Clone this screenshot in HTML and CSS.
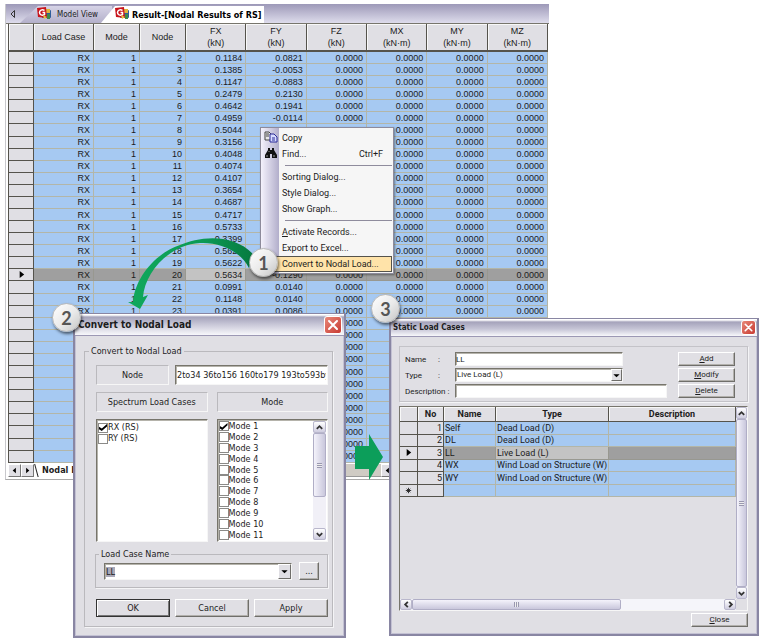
FILE: index.html
```html
<!DOCTYPE html>
<html lang="en">
<head>
<meta charset="utf-8">
<title>Convert to Nodal Load</title>
<link rel="stylesheet" href="styles.css">
</head>
<body>
<svg class="defs" aria-hidden="true">
  <symbol id="app" viewBox="0 0 14 13">
    <rect x="5" y="3" width="9" height="8" rx="1" fill="#2f5d9c"/>
    <rect x="9" y="2" width="4" height="4" fill="#e0b43a"/>
    <rect x="10" y="7" width="3" height="5" fill="#3c8a4a"/>
    <path d="M0 1 9 0 10 11 1 10Z" fill="#c8141c"/>
    <path d="M7.500 3.500C5 2 2.500 3.500 2.500 5.500S5 9 7.500 7.500V5.500H5.500" fill="none" stroke="#fff" stroke-width="1.500"/>
    <path d="M6 8 10 10 7 12Z" fill="#e8c040"/>
  </symbol>
  <symbol id="x" viewBox="0 0 16 16">
    <path d="M4 4 12 12M12 4 4 12" stroke="#fff" stroke-width="2" stroke-linecap="round"/>
  </symbol>
  <symbol id="up" viewBox="0 0 10 10"><path d="M2 6.500 5 3.500 8 6.500" fill="none" stroke="#333" stroke-width="2"/></symbol>
  <symbol id="down" viewBox="0 0 10 10"><path d="M2 3.500 5 6.500 8 3.500" fill="none" stroke="#333" stroke-width="2"/></symbol>
  <symbol id="left" viewBox="0 0 10 10"><path d="M6.500 2 3.500 5 6.500 8" fill="none" stroke="#333" stroke-width="2"/></symbol>
  <symbol id="right" viewBox="0 0 10 10"><path d="M3.500 2 6.500 5 3.500 8" fill="none" stroke="#333" stroke-width="2"/></symbol>
  <symbol id="tri-left" viewBox="0 0 10 10"><path d="M6.500 2V8L3 5Z"/></symbol>
  <symbol id="tri-right" viewBox="0 0 10 10"><path d="M3.500 2V8L7 5Z"/></symbol>
  <symbol id="tri-down" viewBox="0 0 10 10"><path d="M1.500 3.500H8.500L5 7Z"/></symbol>
  <symbol id="marker" viewBox="0 0 10 10"><path d="M3 1V9L8 5Z"/></symbol>
  <symbol id="star" viewBox="0 0 10 10"><path d="M5 2V8M2 5H8M3 3 7 7M7 3 3 7" stroke="#222" stroke-width="1"/></symbol>
</svg>

<main class="desktop">
  <section class="results" aria-label="Nodal Results">
    <nav class="tabs">
      <button class="tabs-prev" aria-label="Previous tab"><svg viewBox="0 0 10 10"><path d="M6.500 1.500V8.500L3 5Z" fill="none" stroke="#333"/></svg></button>
      <a class="tab tab-view" href="#"><svg><use href="#app"/></svg>Model View</a>
      <a class="tab tab-active" href="#"><svg><use href="#app"/></svg>Result-[Nodal Results of RS]</a>
    </nav>
    <div class="grid-wrap">
      <table class="grid">
        <colgroup><col class="c-mark"><col class="c-case"><col class="c-id"><col class="c-id"><col><col><col><col><col><col></colgroup>
        <thead><tr><th></th><th>Load Case</th><th>Mode</th><th>Node</th><th>FX<br>(kN)</th><th>FY<br>(kN)</th><th>FZ<br>(kN)</th><th>MX<br>(kN·m)</th><th>MY<br>(kN·m)</th><th>MZ<br>(kN·m)</th></tr></thead>
        <tbody id="rows"></tbody>
      </table>
    </div>
    <div class="sheets">
      <button aria-label="Previous sheet"><svg><use href="#tri-left"/></svg></button>
      <button aria-label="Next sheet"><svg><use href="#tri-right"/></svg></button>
      <a class="sheet" href="#">Nodal R</a>
      <span class="sheet-track"></span>
      <button aria-label="Scroll left"><svg><use href="#tri-left"/></svg></button>
      <span class="sheet-rest"></span>
    </div>
  </section>

  <svg class="swoop" viewBox="0 0 130 76" aria-hidden="true">
    <defs><linearGradient id="g"><stop offset="0" stop-color="#10a85c"/><stop offset=".6" stop-color="#0c9a54"/><stop offset="1" stop-color="#067a40"/></linearGradient></defs>
    <path d="M0 65 5 65C7 40 28 16 52 8 70 0 104 -5 125 17L121 31C112 13 90 5 72 6 40 8 17 36 15 60L20 58 12 72Z" fill="url(#g)"/>
  </svg>

  <menu class="context">
    <li><button><svg viewBox="0 0 14 12"><path d="M1 1H5L7 3V9H1Z" fill="#e8e8e8" stroke="#444"/><path d="M2 3H5M2 5H5" stroke="#444"/><path d="M6 3H10L13 6V11H6Z" fill="#d8dcff" stroke="#2a2a98"/><path d="M8 7H11M8 9H11" stroke="#2a2a98"/></svg>Copy</button></li>
    <li><button><svg viewBox="0 0 14 12"><path d="M4 1H6V3H8V1H10V3L13 8V11H8V7H6V11H1V8L4 3Z" fill="#111"/><path d="M3 8V10M10 8V10M5 4V5" stroke="#999"/></svg>Find...<kbd>Ctrl+F</kbd></button></li>
    <li class="rule"></li>
    <li><button>Sorting Dialog...</button></li>
    <li><button>Style Dialog...</button></li>
    <li><button>Show Graph...</button></li>
    <li class="rule"></li>
    <li><button><u>A</u>ctivate Records...</button></li>
    <li><button>Export to Excel...</button></li>
    <li><button class="hot">Convert to Nodal Load...</button></li>
  </menu>

  <form class="dialog convert">
    <header><h2>Convert to Nodal Load</h2><button type="button" class="close" aria-label="Close"><svg><use href="#x"/></svg></button></header>
    <fieldset class="main-group">
      <legend>Convert to Nodal Load</legend>
      <div class="node-row">
        <label class="plate" for="node">Node</label>
        <input class="sunken" id="node" value="2to34 36to156 160to179 193to593by">
      </div>
      <div class="lists">
        <span class="plate">Spectrum Load Cases</span>
        <span class="plate">Mode</span>
        <div class="list sunken">
          <label><input type="checkbox" checked>RX (RS)</label>
          <label><input type="checkbox">RY (RS)</label>
        </div>
        <div class="list modes sunken">
          <div class="mode-items">
            <label><input type="checkbox" checked>Mode 1</label>
            <label><input type="checkbox">Mode 2</label>
            <label><input type="checkbox">Mode 3</label>
            <label><input type="checkbox">Mode 4</label>
            <label><input type="checkbox">Mode 5</label>
            <label><input type="checkbox">Mode 6</label>
            <label><input type="checkbox">Mode 7</label>
            <label><input type="checkbox">Mode 8</label>
            <label><input type="checkbox">Mode 9</label>
            <label><input type="checkbox">Mode 10</label>
            <label><input type="checkbox">Mode 11</label>
          </div>
          <div class="vbar wide">
            <button type="button" aria-label="Up"><svg><use href="#up"/></svg></button>
            <i class="thumb"></i><i class="track"></i>
            <button type="button" aria-label="Down"><svg><use href="#down"/></svg></button>
          </div>
        </div>
      </div>
      <fieldset class="name-group">
        <legend>Load Case Name</legend>
        <div class="combo sunken">
          <button type="button" class="combo-text" aria-label="Load case"><mark>LL</mark></button>
          <button type="button" class="drop" aria-label="Open"><svg><use href="#tri-down"/></svg></button>
        </div>
        <button type="button" class="raised more" aria-label="More">...</button>
      </fieldset>
      <div class="actions">
        <button type="button" class="raised default">OK</button>
        <button type="button" class="raised">Cancel</button>
        <button type="button" class="raised">Apply</button>
      </div>
    </fieldset>
  </form>

  <svg class="arrow" viewBox="0 0 28 46" aria-hidden="true"><path d="M0 12H14V0L28 23 14 46V35H0Z" fill="#0c9e5a"/></svg>

  <form class="dialog static">
    <header><h2>Static Load Cases</h2><button type="button" class="close" aria-label="Close"><svg><use href="#x"/></svg></button></header>
    <div class="static-body">
      <div class="fields">
        <label for="name">Name</label><span>:</span><input class="sunken" id="name" value="LL">
        <button type="button" class="raised"><u>A</u>dd</button>
        <label for="type">Type</label><span>:</span>
        <div class="select-wrap"><select class="sunken" id="type"><option>Live Load (L)</option></select><span class="drop"><svg><use href="#tri-down"/></svg></span></div>
        <button type="button" class="raised"><u>M</u>odify</button>
        <label class="wide-label" for="desc">Description :</label><input class="sunken long" id="desc">
        <button type="button" class="raised"><u>D</u>elete</button>
      </div>
      <div class="cases">
        <div class="case-area">
          <table class="grid case-grid">
            <colgroup><col class="k-mark"><col class="k-no"><col class="k-name"><col class="k-type"><col></colgroup>
            <thead><tr><th></th><th>No</th><th>Name</th><th>Type</th><th>Description</th></tr></thead>
            <tbody>
              <tr><th></th><th>1</th><td>Self</td><td>Dead Load (D)</td><td></td></tr>
              <tr><th></th><th>2</th><td>DL</td><td>Dead Load (D)</td><td></td></tr>
              <tr class="current"><th><svg><use href="#marker"/></svg></th><th>3</th><td>LL</td><td class="focus">Live Load (L)</td><td></td></tr>
              <tr><th></th><th>4</th><td>WX</td><td>Wind Load on Structure (W)</td><td></td></tr>
              <tr><th></th><th>5</th><td>WY</td><td>Wind Load on Structure (W)</td><td></td></tr>
              <tr><th><svg><use href="#star"/></svg></th><th></th><td></td><td></td><td></td></tr>
            </tbody>
          </table>
        </div>
        <div class="vbar">
          <button type="button" aria-label="Up"><svg><use href="#up"/></svg></button>
          <i class="thumb full"></i>
          <button type="button" aria-label="Down"><svg><use href="#down"/></svg></button>
        </div>
        <div class="hbar">
          <button type="button" aria-label="Left"><svg><use href="#left"/></svg></button>
          <i class="thumb"></i><i class="track"></i>
          <button type="button" aria-label="Right"><svg><use href="#right"/></svg></button>
        </div>
      </div>
      <div class="foot"><button type="button" class="raised"><u>C</u>lose</button></div>
    </div>
  </form>

  <span class="step step-1">1</span>
  <span class="step step-2">2</span>
  <span class="step step-3">3</span>
</main>
<script src="app.js"></script>
</body>
</html>
```
FILE: styles.css
```css
* { box-sizing: border-box; }
body { margin: 0; background: #fff; color: #1c1c1c; font-family: "DejaVu Sans Condensed", "DejaVu Sans", sans-serif; font-size: 9px; line-height: 12px; }
button, input, select { font: inherit; color: inherit; margin: 0; padding: 0; border: 0; border-radius: 0; background: none; min-width: 0; }
a { color: inherit; text-decoration: none; }
svg { display: block; }
.defs { position: absolute; width: 0; height: 0; }
.desktop { position: relative; min-height: 100vh; overflow: hidden; }

/* results window */
.results { position: absolute; left: 5px; top: 4px; width: 544px; height: 476px; display: flex; flex-direction: column; border-left: 1px solid #c8c8cc; border-bottom: 1px solid #aaa; background: #fff; }
.tabs { flex: none; height: 19px; display: flex; align-items: flex-end; background: linear-gradient(#9d99b8, #dedcec); }
.tabs-prev { width: 14px; height: 19px; display: grid; place-items: center; }
.tabs-prev svg { width: 10px; height: 10px; }
.tab { flex: none; display: flex; align-items: center; gap: 6px; height: 17px; white-space: nowrap; }
.tab svg { flex: none; width: 14px; height: 13px; margin-top: -2px; }
.tab-view { width: 92px; padding-left: 17px; font-size: 8px; background: linear-gradient(#d6d3e6, #b4b0ca); clip-path: polygon(18px 0, 100% 0, 100% 100%, 0 100%); }
.tab-active { margin-left: -11px; padding: 0 3px 0 14px; gap: 3px; font-weight: bold; color: #000; background: #fff; clip-path: polygon(14px 0, 100% 0, 100% 100%, 0 100%); }
.grid-wrap { flex: 1; min-height: 0; padding: 0 1px 0 2px; border-top: 1px solid #77756c; }
.grid { border-collapse: separate; border-spacing: 0; table-layout: fixed; width: 100%; height: 100%; font-family: "Liberation Sans", Arial, sans-serif; font-size: 9px; line-height: 10px; border-left: 1px solid #55534c; }
.c-mark { width: 25px; }
.c-case { width: 60px; }
.c-id { width: 46px; }
.grid th { padding: 0; font-weight: normal; background: #e0dfe4; border-right: 1px solid #55534c; border-bottom: 1px solid #55534c; }
.grid thead th { height: 28px; line-height: 12px; border-bottom: 2px solid #55534c; box-shadow: inset 1px 1px #f8f8f8; }
.grid td { height: 11px; padding: 0 3px 0 1px; overflow: hidden; white-space: nowrap; text-align: right; background: #a6c9f2; border-right: 1px solid #b3b6a8; border-bottom: 1px solid #b3b6a8; }
.grid tbody svg { width: 9px; height: 9px; margin: auto; }
.grid .current td { background: #9f9f9f; border-color: #989890; }
.grid .current .focus { background: #c3c3c3; }
.sheets { flex: none; height: 16px; padding: 1px 0 2px 2px; display: flex; }
.sheets button { width: 13px; border: 1px solid; border-color: #fff #777 #777 #fff; background: #e0dfe4; display: grid; place-items: center; }
.sheets svg { width: 9px; height: 9px; }
.sheet { width: 310px; padding-left: 8px; font-weight: bold; background: linear-gradient(75deg, #fff 3px, #222 4px, #fff 5px); }
.sheet-track { width: 37px; background: #cfcbc4; border-bottom: 1px solid #999; }
.sheet-rest { flex: 1; background: #e0dfe4; }

/* overlays */
.swoop { position: absolute; left: 128px; top: 237px; width: 130px; height: 76px; }
.arrow { position: absolute; left: 355px; top: 434px; width: 28px; height: 46px; }
.step { position: absolute; width: 29px; height: 29px; display: grid; place-items: center; border: 1px solid #b8b8b8; border-radius: 50%; background: linear-gradient(135deg, #fff, #e9e9e9 55%, #c4c4c4); box-shadow: 1px 2px 3px rgba(0,0,0,.55); font: bold 18px/18px Lato, sans-serif; color: #555; }
.step-1 { left: 249px; top: 248px; }
.step-2 { left: 52px; top: 303px; }
.step-3 { left: 371px; top: 294px; }

/* context menu */
.context { position: absolute; left: 260px; top: 127px; width: 134px; margin: 0; padding: 2px 1px 1px; list-style: none; font-family: Roboto, sans-serif; border: 1px solid #8d8b9b; box-shadow: 1px 1px 2px rgba(0,0,0,.4); background: linear-gradient(90deg, #f4f2fc, #b2aecb 18px, #f6f6f6 18px); }
.context button { position: relative; width: 100%; height: 16px; padding: 0 9px 0 20px; display: flex; justify-content: space-between; align-items: center; white-space: pre; }
.context button:has(u) { justify-content: flex-start; }
.context svg { position: absolute; left: 2px; top: 1px; width: 14px; height: 12px; }
.context kbd { font: inherit; }
.context .rule { height: 7px; margin-left: 23px; background: linear-gradient(transparent 3px, #8f8c9d 3px, #8f8c9d 4px, transparent 4px); }
.context .hot { background: #ffe3a9; border: 1px solid #55534c; padding-left: 19px; }

/* dialogs */
.dialog { position: absolute; display: flex; flex-direction: column; border: 2px solid #8986a3; border-top-width: 1px; background: #e0dfe4; box-shadow: inset 0 0 0 1px #c3c1d3; }
.dialog header { flex: none; display: flex; align-items: center; justify-content: space-between; border-bottom: 1px solid #9c98b4; background: linear-gradient(#fff 1px, #a5a3bb 3px, #c6c5d6 10px, #f8f8fb); }
.dialog h2 { margin: 0; font-weight: bold; white-space: nowrap; }
.close { border: 1px solid #fff; border-radius: 3px; background: linear-gradient(135deg, #e88878, #c83a32); }
.close svg { width: 100%; height: 100%; }
.sunken { background: #fff; border: 1px solid; border-color: #77756c #f6f6f6 #f6f6f6 #77756c; box-shadow: inset 1px 1px #b5b3ab; }
.raised { background: #e0dfe4; border: 1px solid; border-color: #fff #6f6e6a #6f6e6a #fff; box-shadow: inset -1px -1px #b2b0ac; }
.drop { display: grid; place-items: center; background: #e0dfe4; border: 1px solid; border-color: #fff #6f6e6a #6f6e6a #fff; }
.drop svg { width: 9px; height: 9px; }
fieldset { min-width: 0; margin: 0; border: 1px solid #bab9bd; box-shadow: 1px 1px #f4f4f6; }
legend { padding: 0 2px; }

.convert { left: 73px; top: 313px; width: 273px; height: 325px; }
.convert header { height: 22px; padding: 0 2px 0 3px; }
.convert h2 { font-size: 10px; }
.convert .close { width: 18px; height: 18px; }
.main-group { flex: 1; margin: 9px 11px 9px 9px; padding: 8px 4px 9px 11px; display: flex; flex-direction: column; }
.main-group > legend { margin-left: -7px; }
.plate { display: grid; place-items: center; height: 20px; border: 1px solid; border-color: #bab9bd #f6f6f6 #f6f6f6 #bab9bd; }
.node-row { display: grid; grid-template-columns: 73px 1fr; gap: 6px; margin-bottom: 7px; }
.node-row input { width: 100%; height: 20px; padding: 0 1px; }
.lists { display: grid; grid-template-columns: 1fr 1fr; column-gap: 9px; row-gap: 7px; }
.list { height: 123px; padding: 2px 1px; }
.list label { display: flex; align-items: center; height: 11px; line-height: 11px; white-space: nowrap; }
.modes { display: flex; padding: 1px; }
.mode-items { flex: 1; display: grid; grid-auto-rows: 1fr; }
.mode-items label { height: auto; min-height: 0; line-height: 10px; }
.list input { appearance: none; flex: none; width: 10px; height: 10px; border: 1px solid #8b8a88; background: #fff; display: grid; place-items: center; }
.list input:checked::before { content: ""; width: 8px; height: 7px; background: #000; clip-path: polygon(0 40%, 35% 65%, 100% 0, 100% 35%, 35% 100%, 0 75%); }
.name-group { margin: 6px 0 0 -1px; height: 40px; padding: 0 8px; display: flex; gap: 7px; align-items: flex-start; }
.name-group legend { margin-left: -5px; }
.combo { flex: 1; height: 17px; margin-top: 3px; display: flex; }
.combo-text { flex: 1; text-align: left; padding-left: 1px; }
.combo mark { background: #aaa9b8; color: inherit; }
.combo .drop { width: 13px; }
.more { width: 20px; height: 18px; margin-top: 2px; line-height: 10px; }
.actions { margin-top: 11px; display: grid; grid-template-columns: repeat(3, 1fr); gap: 5px; }
.actions button { height: 18px; }
.actions .default { border-color: #333; box-shadow: inset 1px 1px #fff, inset -1px -1px #777; }

/* scroll bars */
.vbar { display: flex; flex-direction: column; width: 11px; background: #f1f0f7; }
.vbar.wide { width: 13px; }
.vbar button, .hbar button { flex: none; width: 100%; height: 12px; border: 1px solid #b9b7cc; border-radius: 2px; background: linear-gradient(#fff, #cfcde0); display: grid; place-items: center; }
.vbar svg, .hbar svg { width: 9px; height: 9px; }
.thumb { flex: 2; border: 1px solid #b0aec6; border-radius: 2px; display: grid; place-items: center; background: linear-gradient(90deg, #f4f3fb, #c9c7dc); }
.thumb::after { content: ""; width: 5px; height: 5px; background: repeating-linear-gradient(#9a98b0 0 1px, #eee 1px 2px); }
.track { flex: 1; }
.hbar { display: flex; height: 11px; background: #f5f5fa; }
.hbar button { width: 12px; height: 100%; }
.hbar .thumb { background: linear-gradient(#f4f3fb, #c9c7dc); }
.hbar .thumb::after { background: repeating-linear-gradient(90deg, #9a98b0 0 1px, #eee 1px 2px); }

/* static load cases */
.static { left: 389px; top: 318px; width: 370px; height: 318px; font-family: Roboto, sans-serif; font-size: 8px; }
.static header { height: 18px; padding: 0 1px 0 2px; }
.static h2 { font-family: "DejaVu Sans Condensed", sans-serif; font-size: 8px; }
.static .close { width: 15px; height: 15px; }
.static-body { flex: 1; min-height: 0; display: flex; flex-direction: column; padding: 9px 9px 7px 8px; }
.fields { display: grid; grid-template-columns: 33px 17px 168px 1fr 57px; row-gap: 2px; align-items: center; padding: 5px 12px 3px 5px; border: 1px solid #c4c3c8; box-shadow: 1px 1px #f4f4f6; }
.fields label, .fields label + span { padding-top: 2px; }
.fields .sunken { width: 100%; height: 14px; }
.fields .raised { grid-column: 5; height: 14px; line-height: 10px; }
.fields .wide-label { grid-column: 1 / 3; white-space: nowrap; }
.fields .long { grid-column: 3 / 5; width: 212px; }
.select-wrap { position: relative; display: flex; }
.select-wrap select { appearance: none; padding-left: 1px; }
.select-wrap .drop { position: absolute; right: 1px; top: 1px; width: 11px; height: 12px; pointer-events: none; }
.cases { flex: 1; min-height: 0; margin-top: 4px; display: grid; grid-template-columns: 1fr 11px; grid-template-rows: 1fr 11px; border: 1px solid; border-color: #77756c #f6f6f6 #f6f6f6 #77756c; }
.case-area { min-height: 0; }
.case-grid { height: 90px; border-left: 0; font-family: Roboto, sans-serif; }
.k-mark { width: 18px; }
.k-no { width: 26px; }
.k-name { width: 52px; }
.k-type { width: 113px; }
.case-grid thead th { height: 15px; font-weight: bold; border-bottom-width: 1px; }
.case-grid th { text-align: center; }
.case-grid tbody th + th { text-align: right; padding-right: 1px; }
.case-grid td { text-align: left; padding: 0 0 0 1px; }
.foot { display: flex; justify-content: flex-end; margin-top: 2px; }
.foot .raised { width: 57px; height: 14px; line-height: 10px; }
```
FILE: app.js
```js
// FX and FY by node, starting at node 2; a short entry leaves the later columns blank.
const values = [
  ["0.1184", "0.0821"], ["0.1385", "-0.0053"], ["0.1147", "-0.0883"], ["0.2479", "0.2130"],
  ["0.4642", "0.1941"], ["0.4959", "-0.0114"], ["0.5044"], ["0.3156"], ["0.4048"], ["0.4074"],
  ["0.4107"], ["0.3654"], ["0.4687"], ["0.4717"], ["0.5733"], ["0.3399"], ["0.5621"], ["0.5622"],
  ["0.5634", "-0.1290"], ["0.0991", "0.0140"], ["0.1148", "0.0140"], ["0.0391", "0.0086"]
];
const total = 34;
const currentNode = 20;
const zero = "0.0000";
const body = document.getElementById("rows");

for (let i = 0; i < total; i++) {
  const node = i + 2;
  const row = body.insertRow();
  const head = document.createElement("th");
  row.append(head);
  if (node === currentNode) {
    row.className = "current";
    head.innerHTML = '<svg><use href="#marker"/></svg>';
  }
  let cells = ["", "", "", "", "", zero, "", "", ""];
  if (values[i]) {
    const [fx, fy = ""] = values[i];
    cells = ["RX", "1", node, fx, fy, fy && zero, zero, zero, zero];
  }
  cells.forEach((text, column) => {
    const cell = row.insertCell();
    cell.textContent = text;
    if (node === currentNode && column === 3) cell.className = "focus";
  });
}
```
